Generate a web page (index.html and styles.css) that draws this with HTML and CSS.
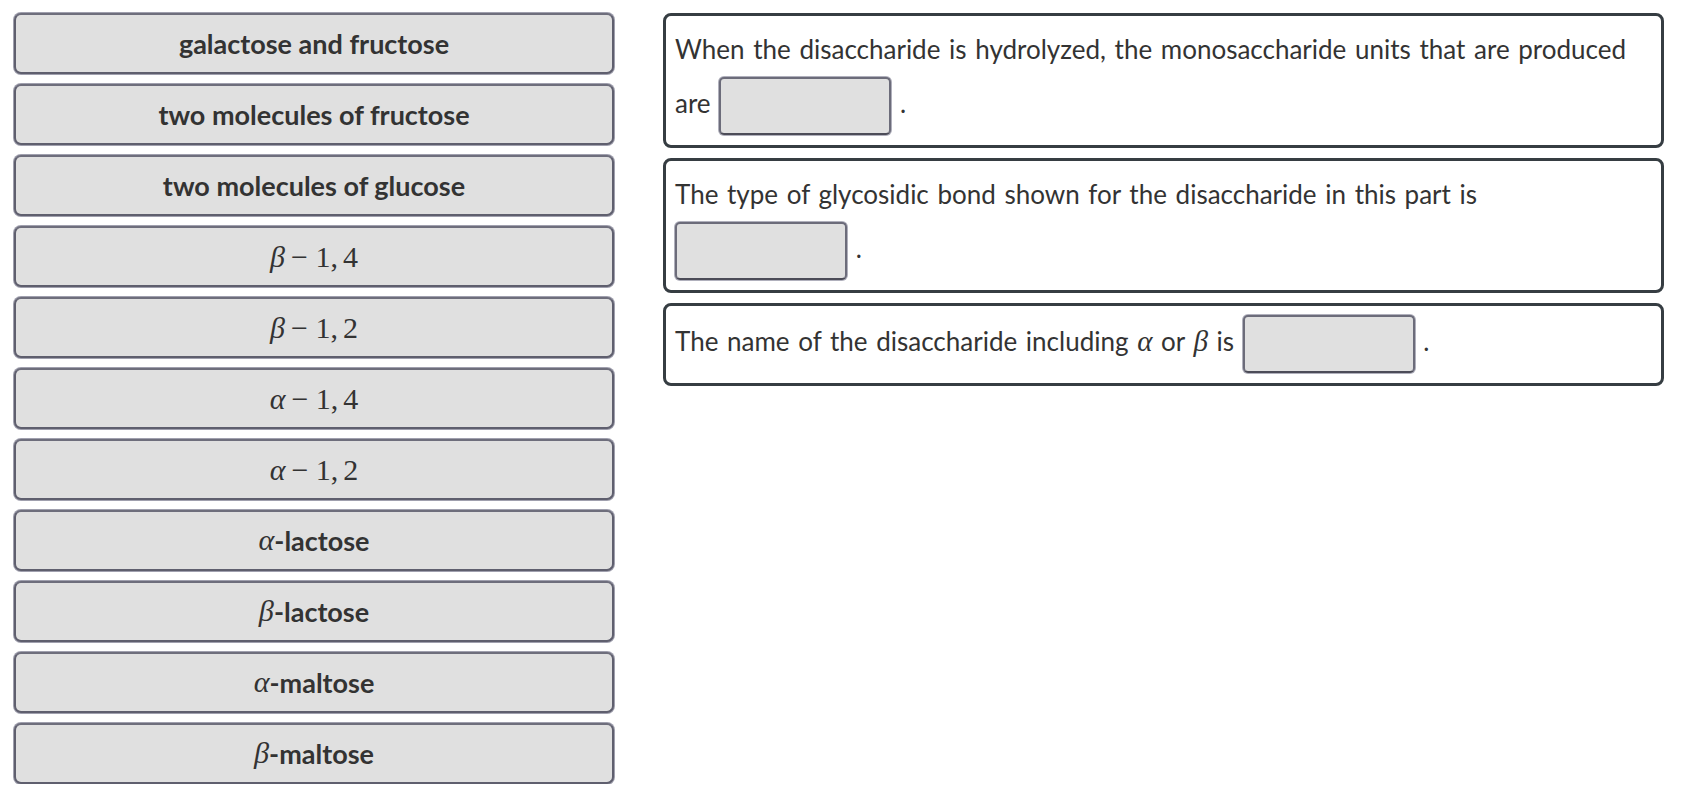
FILE: index.html
```html
<!DOCTYPE html>
<html lang="en">
<head>
    <meta charset="UTF-8">
    <meta name="viewport" content="width=device-width, initial-scale=1.0">
    <title>Disaccharide Labels</title>
    <link rel="stylesheet" href="styles.css">
</head>
<body>
    <div class="layout">
        <div class="choices">
            <div class="choice">galactose and fructose</div>
            <div class="choice">two molecules of fructose</div>
            <div class="choice">two molecules of glucose</div>
            <div class="choice math"><i>β</i> − 1,<span class="thin"></span>4</div>
            <div class="choice math"><i>β</i> − 1,<span class="thin"></span>2</div>
            <div class="choice math"><i>α</i> − 1,<span class="thin"></span>4</div>
            <div class="choice math"><i>α</i> − 1,<span class="thin"></span>2</div>
            <div class="choice"><i class="sym">α</i>-lactose</div>
            <div class="choice"><i class="sym">β</i>-lactose</div>
            <div class="choice"><i class="sym">α</i>-maltose</div>
            <div class="choice"><i class="sym">β</i>-maltose</div>
        </div>

        <div class="questions">
            <div class="question">
                When the disaccharide is hydrolyzed, the monosaccharide units that are produced are <span class="drop"></span> .
            </div>
            <div class="question">
                The type of glycosidic bond shown for the disaccharide in this part is<br><span class="drop"></span> .
            </div>
            <div class="question">
                The name of the disaccharide including <i class="sym">α</i> or <i class="sym">β</i> is <span class="drop"></span> .
            </div>
        </div>
    </div>
</body>
</html>
```

FILE: styles.css
```css
body {
    margin: 0;
    background-color: white;
    font-family: Lato, "Open Sans", Arial, sans-serif;
    color: #333;
}

.layout {
    display: flex;
    align-items: flex-start;
    gap: 49px;
    padding: 13px 18px 0 14px;
}

.choices {
    width: 600px;
    display: flex;
    flex-direction: column;
    gap: 10px;
}

.choice {
    box-sizing: border-box;
    height: 61px;
    display: flex;
    align-items: center;
    justify-content: center;
    background-color: #e0e0e0;
    border: 2px solid #5f5f6e;
    border-top-color: #6e6e7c;
    border-radius: 7px;
    box-shadow: 0 0 0 1px #a0a0ae;
    font-size: 27px;
    font-weight: bold;
    color: #333;
}

.choice.math {
    font-family: "Liberation Serif", "DejaVu Serif", serif;
    font-weight: normal;
    font-size: 30px;
}

.choice.math i {
    margin-right: 6px;
}

.thin {
    display: inline-block;
    width: 5px;
}

.sym {
    font-family: "Liberation Serif", "DejaVu Serif", serif;
    font-weight: normal;
    font-style: italic;
    font-size: 1.12em;
}

.questions {
    width: 1001px;
    display: flex;
    flex-direction: column;
    gap: 10px;
}

.question {
    box-sizing: border-box;
    border: 3px solid #363d42;
    border-radius: 8px;
    padding: 7px 24px 8px 9px;
    font-size: 26px;
    word-spacing: 2px;
    line-height: 52px;
    color: #333;
}

.drop {
    display: inline-block;
    box-sizing: border-box;
    width: 172px;
    height: 58px;
    margin: 2px 0;
    vertical-align: middle;
    background-color: #e0e0e0;
    border: 2px solid #6c6c7a;
    border-bottom-color: #4c4c58;
    border-radius: 5px;
    box-shadow: 0 0 0 1px #b0b0bc;
}
```
